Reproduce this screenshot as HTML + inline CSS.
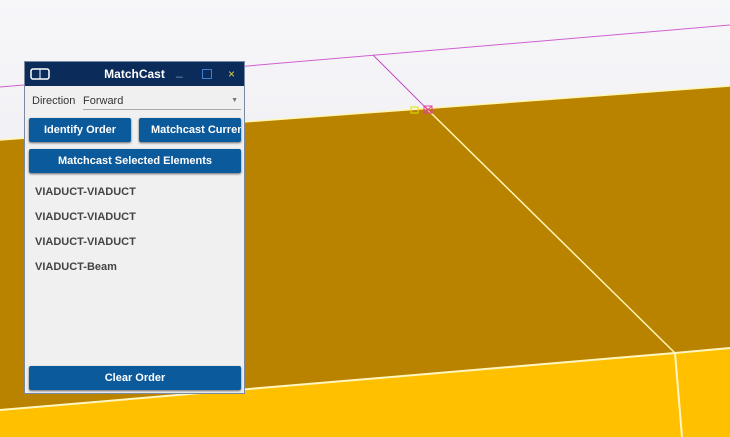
<!DOCTYPE html><html><head><style>
body{margin:0;width:730px;height:437px;overflow:hidden;font-family:"Liberation Sans",sans-serif;position:relative}
.p{position:absolute;left:24px;top:61px;width:221px;height:333px;background:#f0f0f0;border:1px solid #7a8aa0;box-sizing:border-box}
.t{height:24px;background:#0b2b5a;color:#fff;font-weight:bold;font-size:12px;line-height:24px;text-align:center;position:relative}
.b{position:absolute;background:#0b5a9c;color:#fff;font-weight:bold;font-size:11px;text-align:center;line-height:24px;border-radius:2px;box-shadow:0 1px 2px #666;white-space:nowrap;overflow:hidden}
.i{position:absolute;left:10px;font-size:11px;font-weight:bold;color:#444}
</style></head><body>
<svg width="730" height="437" style="position:absolute;left:0;top:0">
<defs><linearGradient id="g" x1="0" y1="0" x2="0" y2="1"><stop offset="0" stop-color="#f7f7fa"/><stop offset="1" stop-color="#e6e6ec"/></linearGradient></defs>
<rect width="730" height="437" fill="url(#g)"/>
<polygon points="0,140 730,86 730,437 0,437" fill="#b98300"/>
<polygon points="0,410 675,353 730,348 730,437 0,437" fill="#ffc000"/>
<line x1="0" y1="140" x2="730" y2="86" stroke="#fff6b0" stroke-width="1.5"/>
<polyline points="0,410 675,353 730,348" fill="none" stroke="#fff6c0" stroke-width="2"/>
<line x1="428" y1="110" x2="675" y2="353" stroke="#fff6b0" stroke-width="1.5"/>
<line x1="675" y1="353" x2="682" y2="437" stroke="#fff6c0" stroke-width="2"/>
<line x1="0" y1="87" x2="730" y2="25" stroke="#d060d0" stroke-width="1"/>
<line x1="373" y1="55" x2="428" y2="110" stroke="#c050c0" stroke-width="1"/>
<rect x="411" y="107" width="7" height="6" fill="none" stroke="#e0e000"/>
<rect x="424" y="106" width="8" height="7" fill="none" stroke="#e040a0"/>
<line x1="424" y1="106" x2="432" y2="113" stroke="#e040a0"/><line x1="432" y1="106" x2="424" y2="113" stroke="#e040a0"/>
</svg>
<div class="p">
<div class="t">MatchCast
<svg width="22" height="12" style="position:absolute;left:4px;top:6px"><rect x="2" y="1" width="18" height="10" rx="2" fill="none" stroke="#fff" stroke-width="1.5"/><line x1="11" y1="1" x2="11" y2="11" stroke="#fff"/></svg>
<span style="position:absolute;left:151px;top:-3px;font-weight:normal;color:#7f95b5">_</span>
<span style="position:absolute;left:177px;top:7px;width:8px;height:8px;border:1px solid #3f7fd0"></span>
<span style="position:absolute;left:203px;top:0;color:#e0d040;font-weight:normal">×</span>
</div>
<div style="position:absolute;left:7px;top:33px;font-size:11px;color:#333">Direction</div>
<div style="position:absolute;left:58px;top:31px;width:158px;height:16px;border-bottom:1px solid #aaa;font-size:11px;color:#333;line-height:16px">Forward<span style="position:absolute;right:3px;font-size:7px;color:#777">▼</span></div>
<div class="b" style="left:4px;top:56px;width:102px">Identify Order</div>
<div class="b" style="left:114px;top:56px;width:102px;text-align:left;padding-left:12px;box-sizing:border-box">Matchcast Current</div>
<div class="b" style="left:4px;top:87px;width:212px">Matchcast Selected Elements</div>
<div class="i" style="top:124px">VIADUCT-VIADUCT</div>
<div class="i" style="top:149px">VIADUCT-VIADUCT</div>
<div class="i" style="top:174px">VIADUCT-VIADUCT</div>
<div class="i" style="top:199px">VIADUCT-Beam</div>
<div class="b" style="left:4px;top:304px;width:212px">Clear Order</div>
</div>
</body></html>
